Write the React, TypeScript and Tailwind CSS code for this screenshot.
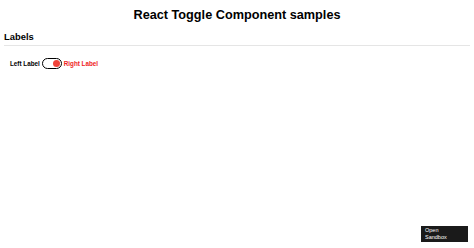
export default function App() {
  return (
    <div className="relative h-[248px] w-[474px] overflow-hidden bg-white font-['Liberation_Sans',Arial,sans-serif] text-black">
      <h1 className="pt-[8px] text-center text-[12.7px] font-bold leading-[15px]">React Toggle Component samples</h1>
      <h2 className="mt-[8px] px-[4px] text-[9.4px] font-bold leading-[12px]">Labels</h2>
      <div className="mx-[4px] mt-[2px] h-px bg-[#e5e5e5]" />
      <div className="mt-[12px] flex items-center gap-[2px] pl-[10px] text-[6.3px] font-bold leading-[11px]">
        <span>Left Label</span>
        <span className="flex h-[11px] w-[20px] items-center justify-end rounded-full border-[1.2px] border-black bg-white px-[1px]">
          <span className="h-[7px] w-[7px] rounded-full bg-[#f0443a]" />
        </span>
        <span className="text-[#ee1c1c]">Right Label</span>
      </div>
      <div className="absolute bottom-[6px] right-[6px] w-[47px] bg-[#1a1a1a] px-[4px] py-[1px] text-[5.5px] leading-[7px] text-white">
        Open
        <br />
        Sandbox
      </div>
    </div>
  )
}
